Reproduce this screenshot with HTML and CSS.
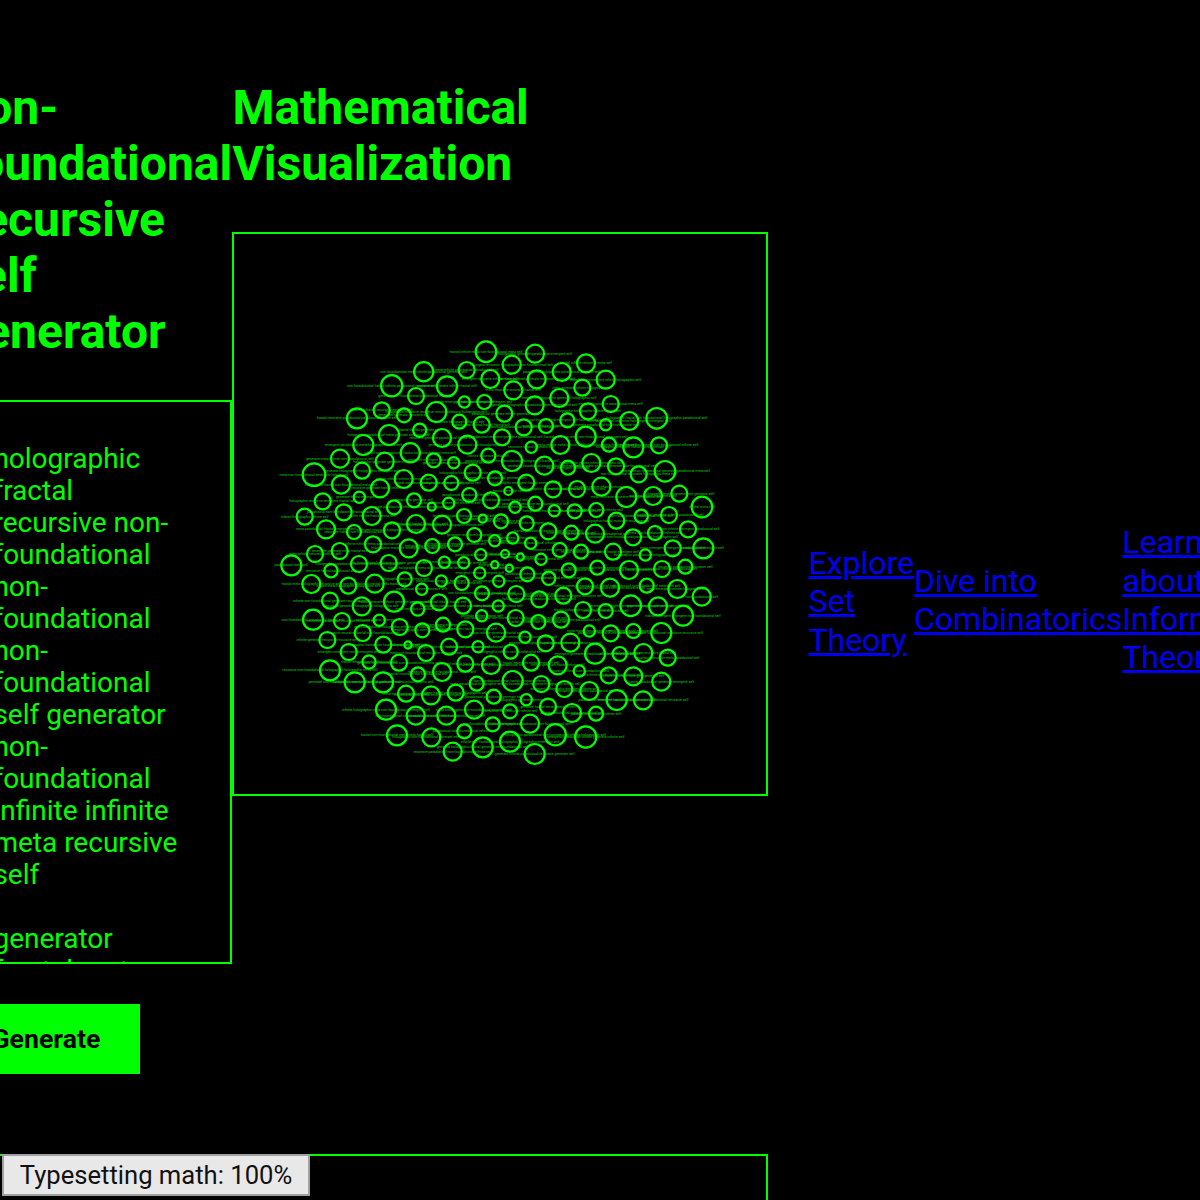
FILE: index.html
```html
<!DOCTYPE html>
<html lang="en">
<head>
<meta charset="utf-8">
<title>Non-foundational Recursive Self Generator</title>
<link rel="stylesheet" href="styles.css">
</head>
<body>
<main class="app">
  <section class="generator">
    <h1 class="title">Non-<br>Foundational<br>Recursive<br>Self<br>Generator</h1>
    <div class="seed">holographic
fractal
recursive non-
foundational
non-
foundational
non-
foundational
self generator
non-
foundational
infinite infinite
meta recursive
self

generator
fractal meta</div>
    <button class="generate" type="button">Generate</button>
  </section>
  <section class="visual">
    <h2 class="title">Mathematical Visualization</h2>
    <div class="panel"><svg id="bubbles" class="bubbles" viewBox="0 0 532 560" width="532" height="560"></svg></div>
  </section>
  <nav class="links">
    <a class="link-first" href="#set">Explore Set Theory</a>
    <a href="#comb">Dive into Combinatorics</a>
    <a href="#info">Learn about Information Theory</a>
  </nav>
  <div class="panel panel-next"></div>
</main>
<div class="message">Typesetting math: 100%</div>
<script src="app.js"></script>
</body>
</html>
```
FILE: styles.css
```css
html, body { margin: 0; padding: 0; background: #000; height: 100%; overflow: hidden; }
body { font-family: Roboto, "Liberation Sans", sans-serif; color: #00ff00; }
.app { display: grid; grid-template-columns: 281px 536px auto; grid-template-rows: 1154px 300px; margin-left: -48.6px; width: max-content; }
.generator, .visual { padding-top: 80px; }
.title { margin: 0; font-size: 48px; font-weight: 700; color: #00ff00; }
.generator .title { line-height: 56px; margin-bottom: 40px; }
.visual .title { line-height: 56.25px; margin-bottom: 39.5px; }
.seed {
  box-sizing: border-box; height: 564px; padding: 41px 40px 0; border: 2px solid #00ff00;
  font-size: 28px; line-height: 32px; white-space: pre; overflow: hidden; color: #00ff00;
}
.generate {
  display: block; margin: 40px 0 0; padding: 0 40px; height: 70px; border: 0; background: #00ff00;
  color: #000; font: 700 26.67px Roboto, sans-serif;
}
.panel { box-sizing: border-box; height: 564px; border: 2px solid #00ff00; }
.panel-next { grid-column: 1 / 3; height: 300px; }
.bubbles { display: block; }
.bubbles circle { fill: none; stroke: #00ff00; stroke-width: 2.2; }
.bubbles text { fill: #00ff00; fill-opacity: 0.8; font-size: 3.5px; text-anchor: middle; font-family: Roboto, sans-serif; }
.links { display: flex; align-self: center; align-items: center; padding: 46px 0 0 40px; }
.links a { width: min-content; color: #0000ee; font-size: 32px; line-height: 38.4px; text-decoration: underline; }
.links .link-first { margin-top: 3px; }
.message {
  position: fixed; left: 2px; bottom: 4px; box-sizing: border-box; width: 308px; height: 42px;
  border: 2px solid #a0a0a0; background: #e8e8e8; color: #111; font-size: 25.6px; line-height: 39px; text-align: center;
}
```
FILE: app.js
```js
var tiles = [
  [270, 330, [648,65,33,461,125,31,590,120,26,661,147,29,365,167,34,531,169,32,438,198,26,583,216,19,643,216,23,335,241,26,402,256,23,261,265,32,499,246,32,568,275,23,635,284,26,449,301,22,357,315,32,516,324,29,592,344,29,280,345,32,421,368,31,655,377,23,210,386,29,344,395,29,491,391,23,551,398,19,132,434,36,276,422,26,608,428,26,401,447,29,476,458,26,544,459,23,213,464,29,330,475,29,598,495,23,663,511,26,268,502,19,432,511,23,158,514,26,485,530,14,536,520,19,372,532,23,221,547,26,104,560,26,305,558,29,582,558,23,638,566,14,438,582,29,516,584,29,168,598,29,252,606,23,366,601,26,613,615,23,309,643,26,416,655,29,487,648,23,555,643,23]],
  [490, 330, [135,71,29,65,104,29,288,100,29,215,126,29,140,148,29,347,149,29,70,181,29,277,173,26,208,204,29,134,226,29,362,222,26,43,251,26,294,244,26,232,271,23,418,273,29,500,265,33,101,292,26,168,288,23,347,284,19,36,322,26,287,320,32,124,352,19,211,345,29,357,344,23,430,352,32,507,346,26,66,393,32,163,407,29,234,413,23,304,399,29,378,409,26,446,433,26,525,424,33,15,445,23,109,458,26,55,483,14,189,478,26,261,477,26,334,470,29,409,501,32,489,498,29,568,491,26,636,531,33,75,532,19,136,521,23,193,542,19,254,544,23,319,540,23,454,559,22,537,555,26,33,574,23,110,580,23,379,572,26,594,598,26,175,604,26,244,608,23,315,611,29,429,622,26,495,609,23,68,624,19,14,632,19,122,640,19,209,660,23,273,665,23,369,665,26,548,655,26,640,655,32]],
  [270, 550, [135,12,26,209,3,26,632,14,19,64,46,32,267,42,26,356,39,26,183,62,22,462,54,26,523,37,19,581,38,19,674,44,13,629,69,19,124,102,29,235,107,26,314,101,29,404,88,23,514,93,19,575,99,23,686,94,19,455,118,19,636,130,23,180,152,26,372,155,32,275,169,29,507,157,26,579,167,26,685,168,19,443,177,22,129,209,32,635,197,19,216,213,26,328,211,19,389,231,26,519,224,23,586,238,26,678,248,29,457,241,23,278,249,26,172,270,26,340,284,26,414,285,13,537,290,26,624,290,19,236,306,26,468,309,26,297,336,22,387,338,26,586,341,26,663,345,29,180,361,32,516,366,29,444,373,23,254,397,32,339,397,32,620,401,23,408,431,26,483,436,29,557,428,26,671,440,23,348,479,32,437,497,29,529,497,29,612,479,29,668,523,23,381,556,32,484,562,29,583,544,23,638,592,32,548,605,29]],
  [490, 550, [45,12,14,91,21,13,153,28,19,466,15,19,58,55,13,236,61,23,112,73,23,322,53,23,417,60,29,516,57,26,586,50,23,176,85,22,285,109,26,360,113,29,470,107,23,562,117,29,635,140,29,79,132,26,148,148,26,220,137,26,422,167,33,504,169,29,279,180,26,347,183,23,579,197,32,77,204,26,145,216,23,213,209,26,105,262,19,298,243,19,362,250,26,430,243,23,514,249,32,167,280,26,241,278,29,62,305,23,315,311,32,389,312,23,460,309,29,533,323,26,123,338,26,203,346,29,268,363,19,356,376,26,430,379,29,68,393,32,514,395,29,154,402,26,223,417,26,298,423,29,109,449,19,380,450,32,459,451,29,174,470,26,246,489,29,318,491,23,60,484,23,120,521,29,196,554,34,287,561,34,60,575,32,134,612,32]]
];
var words = ["fractal", "infinite", "non-foundational", "paradoxical", "holographic", "emergent", "meta", "recursive", "generate"];
var svg = document.getElementById("bubbles");
var NS = "http://www.w3.org/2000/svg";
var seed = 7;
function next(n) { seed = (seed * 31 + 17) % 1009; return seed % n; }
tiles.forEach(function (tile) {
  var d = tile[2];
  for (var i = 0; i < d.length; i += 3) {
    var px = tile[0] + d[i] / 3, py = tile[1] + d[i + 1] / 3, r = d[i + 2] / 3 - 0.7;
    var x = px - 234, y = py - 234;
    var c = document.createElementNS(NS, "circle");
    c.setAttribute("cx", x.toFixed(1)); c.setAttribute("cy", y.toFixed(1)); c.setAttribute("r", r.toFixed(1));
    svg.appendChild(c);
    var n = Math.max(1, Math.round(r * 0.5)), parts = [];
    for (var k = 0; k < n; k++) parts.push(words[next(words.length)]);
    parts.push("self");
    var room = Math.min(px - 273, 727 - px);
    while (parts.length > 1 && parts.join(" ").length * 0.87 > room) parts.shift();
    var t = document.createElementNS(NS, "text");
    t.setAttribute("x", x.toFixed(1)); t.setAttribute("y", (y + 1).toFixed(1));
    t.textContent = parts.join(" ");
    svg.appendChild(t);
  }
});
```
